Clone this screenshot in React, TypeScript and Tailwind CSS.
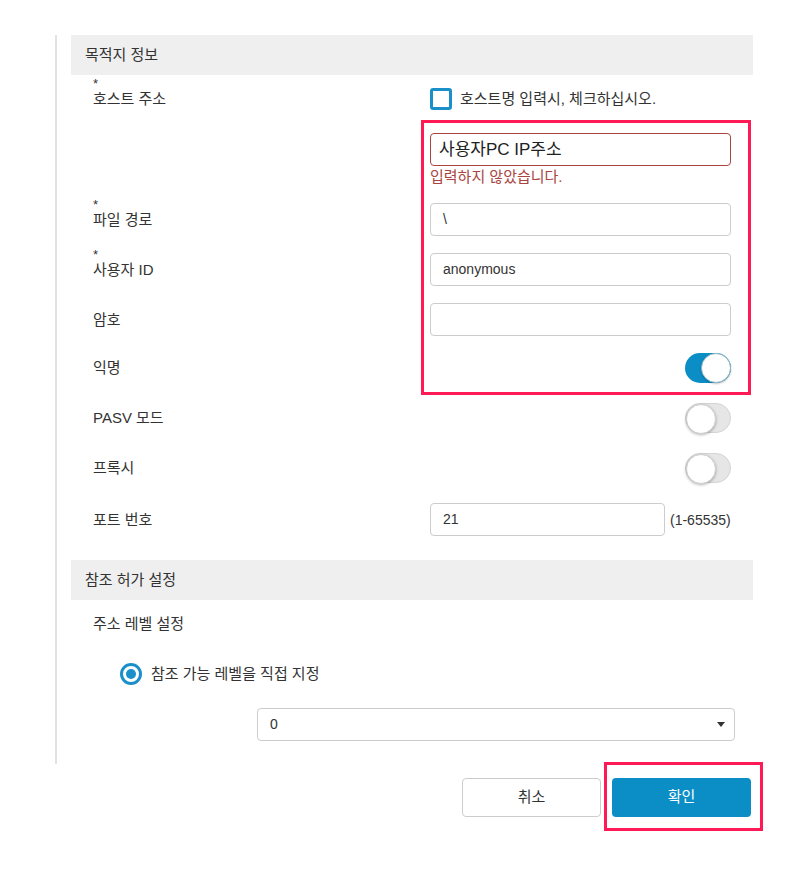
import React from "react";

const font = { fontFamily: '"Liberation Sans", "Noto Sans CJK KR", Arial, sans-serif' };

function Toggle({ on }: { on: boolean }) {
  return (
    <div
      className={
        "relative w-[46px] h-[30px] rounded-full " +
        (on ? "bg-[#0b8ec6]" : "bg-[#e6e6e6] border border-[#d4d4d4]")
      }
    >
      <div
        className={
          "absolute top-0 w-[30px] h-[30px] rounded-full bg-white " +
          (on
            ? "right-0 border border-[#8fb8c9] shadow-[0_1px_2px_rgba(0,0,0,0.25)]"
            : "left-0 -top-px border border-[#cfcfcf] shadow-[0_1px_3px_rgba(0,0,0,0.3)]")
        }
      />
    </div>
  );
}

function Label({ text, star, h }: { text: string; star?: boolean; h: number }) {
  return (
    <div className="w-[359px] pl-[22px] flex items-center" style={{ height: h }}>
      <span className="relative text-[15px] leading-[18px] text-[#333]">
        {star && <span className="absolute left-0 -top-[11px] h-[10px] text-[13px] leading-[10px]">*</span>}
        {text}
      </span>
    </div>
  );
}

function TextInput({ value, w = 301 }: { value: string; w?: number }) {
  return (
    <div
      className="h-[33px] border border-[#cccccc] rounded-[4px] bg-white flex items-center px-[12px] text-[14px] text-[#333]"
      style={{ width: w }}
    >
      {value}
    </div>
  );
}

export default function App() {
  return (
    <div className="w-[800px] h-[881px] bg-white relative" style={font}>
      <div className="pt-[35px] pl-[55px]">
        <div className="relative w-[698px] border-l-2 border-[#e2e2e2] pl-[14px] pb-[23px]">
          {/* Section 1 */}
          <div className="h-[40px] bg-[#efefef] flex items-center pl-[14px] text-[15px] text-[#333]">
            목적지 정보
          </div>

          <div className="mt-[13px] flex h-[22px]">
            <Label text="호스트 주소" star h={22} />
            <div className="flex items-center">
              <div className="w-[22px] h-[22px] border-[3px] border-[#1a8fc9] rounded-[3px] bg-white" />
              <span className="ml-[8px] text-[15px] leading-[20px] text-[#333]">호스트명 입력시, 체크하십시오.</span>
            </div>
          </div>

          <div className="mt-[23px] flex">
            <div className="w-[359px]" />
            <div>
              <div className="w-[301px] h-[33px] border border-[#a94442] rounded-[4px] bg-white flex items-center px-[8px] text-[17px] text-[#222]">
                사용자PC IP주소
              </div>
              <div className="mt-[2px] text-[15px] text-[#a94442] leading-[18px]">입력하지 않았습니다.</div>
            </div>
          </div>

          <div className="mt-[17px]">
            <div className="h-[50px] flex items-start">
              <Label text="파일 경로" star h={33} />
              <TextInput value="\" />
            </div>
            <div className="h-[50px] flex items-start">
              <Label text="사용자 ID" star h={33} />
              <TextInput value="anonymous" />
            </div>
            <div className="h-[50px] flex items-start">
              <Label text="암호" h={33} />
              <TextInput value="" />
            </div>
            <div className="h-[50px] flex items-start">
              <Label text="익명" h={30} />
              <div className="w-[301px] flex justify-end">
                <Toggle on />
              </div>
            </div>
            <div className="h-[50px] flex items-start">
              <Label text="PASV 모드" h={30} />
              <div className="w-[301px] flex justify-end">
                <Toggle on={false} />
              </div>
            </div>
            <div className="h-[50px] flex items-start">
              <Label text="프록시" h={30} />
              <div className="w-[301px] flex justify-end">
                <Toggle on={false} />
              </div>
            </div>
            <div className="h-[33px] flex items-start">
              <Label text="포트 번호" h={33} />
              <TextInput value="21" w={235} />
              <span className="ml-[5px] mt-[7px] text-[14px] text-[#333]">(1-65535)</span>
            </div>
          </div>

          {/* Section 2 */}
          <div className="mt-[24px] h-[40px] bg-[#efefef] flex items-center pl-[14px] text-[15px] text-[#333]">
            참조 허가 설정
          </div>

          <div className="mt-[15px] pl-[22px] h-[18px] flex items-center text-[15px] text-[#333]">주소 레벨 설정</div>

          <div className="mt-[30px] pl-[49px] flex items-center h-[22px]">
            <div className="w-[22px] h-[22px] rounded-full border-[3px] border-[#1a8fc9] flex items-center justify-center">
              <div className="w-[10px] h-[10px] rounded-full bg-[#1a8fc9]" />
            </div>
            <span className="ml-[9px] text-[15px] leading-[20px] text-[#333]">참조 가능 레벨을 직접 지정</span>
          </div>

          <div className="mt-[23px] pl-[186px]">
            <div className="w-[478px] h-[33px] border border-[#cccccc] rounded-[4px] bg-white flex items-center justify-between pl-[12px] pr-[9px] text-[14px] text-[#333]">
              <span>0</span>
              <span className="w-0 h-0 border-l-[4px] border-r-[4px] border-t-[5px] border-l-transparent border-r-transparent border-t-[#333]" />
            </div>
          </div>

          {/* highlight overlay */}
          <div className="absolute left-[364px] top-[85px] w-[330px] h-[275px] border-[3px] border-[#ff1a55] pointer-events-none" />
        </div>

        <div className="mt-[14px] w-[696px] flex justify-end gap-[11px]">
          <button className="w-[139px] h-[39px] border border-[#cccccc] rounded-[4px] bg-white text-[15px] text-[#333]">
            취소
          </button>
          <div className="relative">
            <button className="w-[139px] h-[39px] rounded-[4px] bg-[#0b8ec6] text-[15px] text-white">확인</button>
            <div className="absolute -left-[8px] -top-[16px] w-[159px] h-[69px] border-[3px] border-[#ff1a55] pointer-events-none" />
          </div>
        </div>
      </div>
    </div>
  );
}
